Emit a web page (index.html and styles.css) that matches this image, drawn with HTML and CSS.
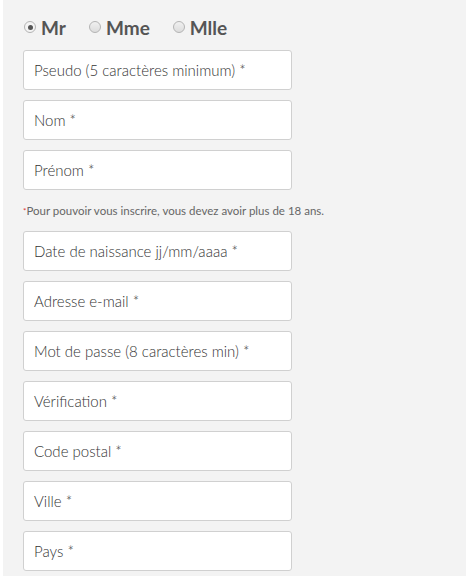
FILE: index.html
```html
<!DOCTYPE html>
<html lang="fr">
<head>
<meta charset="utf-8">
<link rel="stylesheet" href="styles.css">
</head>
<body>
<div class="panel">
  <div class="civilite">
    <label class="opt"><span class="radio checked"></span><span class="lbl">Mr</span></label>
    <label class="opt"><span class="radio"></span><span class="lbl">Mme</span></label>
    <label class="opt"><span class="radio"></span><span class="lbl">Mlle</span></label>
  </div>
  <div class="field">Pseudo (5 caractères minimum) *</div>
  <div class="field">Nom *</div>
  <div class="field">Prénom *</div>
  <p class="note"><span class="req">*</span>Pour pouvoir vous inscrire, vous devez avoir plus de 18 ans.</p>
  <div class="field">Date de naissance jj/mm/aaaa *</div>
  <div class="field">Adresse e-mail *</div>
  <div class="field">Mot de passe (8 caractères min) *</div>
  <div class="field">Vérification *</div>
  <div class="field">Code postal *</div>
  <div class="field">Ville *</div>
  <div class="field">Pays *</div>
</div>
</body>
</html>
```

FILE: styles.css
```css
html, body {
  margin: 0;
  padding: 0;
  background: #ffffff;
}
body {
  font-family: "Lato", "Open Sans", sans-serif;
  color: #444;
}
.panel {
  margin-left: 3px;
  width: 463px;
  height: 576px;
  background: #f3f3f3;
  padding: 14px 0 0 20px;
  box-sizing: border-box;
  display: flex;
  flex-direction: column;
  gap: 10px;
  overflow: hidden;
}
.civilite {
  display: flex;
  align-items: center;
  height: 26px;
  flex-shrink: 0;
}
.opt {
  display: flex;
  align-items: center;
  margin-right: 22px;
}
.radio {
  width: 10px;
  height: 10px;
  border-radius: 50%;
  border: 1px solid #b4b4b4;
  background: linear-gradient(#f0f0f0, #dcdcdc);
  box-sizing: content-box;
  margin: 0 5px 0 1px;
  position: relative;
}
.radio.checked {
  background: #f4f4f4;
}
.radio.checked::after {
  content: "";
  position: absolute;
  left: 2.5px;
  top: 2.5px;
  width: 5px;
  height: 5px;
  border-radius: 50%;
  background: #555;
}
.lbl {
  font-size: 19px;
  font-weight: 700;
  color: #555;
}
.field {
  width: 269px;
  height: 40px;
  box-sizing: border-box;
  background: #fff;
  border: 1px solid #d0d0d0;
  border-radius: 3px;
  padding-left: 10px;
  display: flex;
  align-items: center;
  font-size: 15px;
  font-weight: 300;
  color: #333;
  flex-shrink: 0;
}
.note {
  margin: 5px 0 4px 0;
  font-size: 11.5px;
  color: #666;
  font-weight: 400;
  line-height: 12px;
  white-space: nowrap;
  flex-shrink: 0;
}
.req {
  color: #d33;
  font-size: 8px;
  vertical-align: top;
}
```
